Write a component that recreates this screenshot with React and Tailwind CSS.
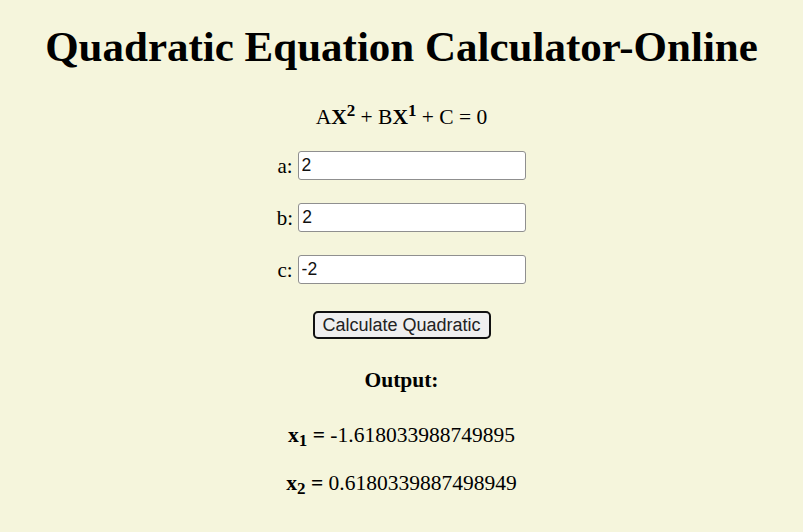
import { useState } from "react";

const serif = { fontFamily: '"Liberation Serif", "Times New Roman", serif' };
const sans = { fontFamily: '"Liberation Sans", Arial, sans-serif' };

function solve(a, b, c) {
    const d = b * b - 4 * a * c;
    const s = Math.sqrt(d);
    return [(-b - s) / (2 * a), (-b + s) / (2 * a)];
}

export default function App() {
    const [a, setA] = useState("2");
    const [b, setB] = useState("2");
    const [c, setC] = useState("-2");
    const [roots, setRoots] = useState(solve(2, 2, -2));

    const fields = [
        { label: "a:", value: a, set: setA },
        { label: "b:", value: b, set: setB },
        { label: "c:", value: c, set: setC },
    ];

    return (
        <div className="min-h-[532px] bg-[#f5f5dc] text-black flex flex-col items-center" style={serif}>
            <h1 className="mt-[22px] text-[43px] leading-[50px] font-bold">Quadratic Equation Calculator-Online</h1>

            <p className="mt-[33px] text-[21.5px] leading-[24px]">
                A<b>X<sup className="text-[17px]">2</sup></b> + B<b>X<sup className="text-[17px]">1</sup></b> + C = 0
            </p>

            <div className="mt-[22px] flex flex-col items-center gap-[23px]">
                {fields.map((f) => (
                    <div key={f.label} className="flex items-center gap-[5px]">
                        <span className="text-[21px] leading-[24px]">{f.label}</span>
                        <input
                            value={f.value}
                            onChange={(e) => f.set(e.target.value)}
                            className="w-[228px] h-[29px] bg-white border border-[#8f8f8f] rounded-[3px] px-[3px] text-[17.5px] text-[#111] outline-none"
                            style={sans}
                        />
                    </div>
                ))}
            </div>

            <button
                onClick={() => setRoots(solve(Number(a), Number(b), Number(c)))}
                className="mt-[27px] w-[178px] h-[28px] bg-[#efefef] border-2 border-[#111] rounded-[5px] text-[18px] leading-[20px] text-[#222]"
                style={sans}
            >
                Calculate Quadratic
            </button>

            <p className="mt-[29px] text-[21.5px] leading-[24px] font-bold">Output:</p>

            <p className="mt-[31px] text-[21.5px] leading-[24px]">
                <b>x<sub className="text-[17px]">1</sub> =</b> {roots[0]}
            </p>
            <p className="mt-[24px] text-[21.5px] leading-[24px]">
                <b>x<sub className="text-[17px]">2</sub> =</b> {roots[1]}
            </p>
        </div>
    );
}
